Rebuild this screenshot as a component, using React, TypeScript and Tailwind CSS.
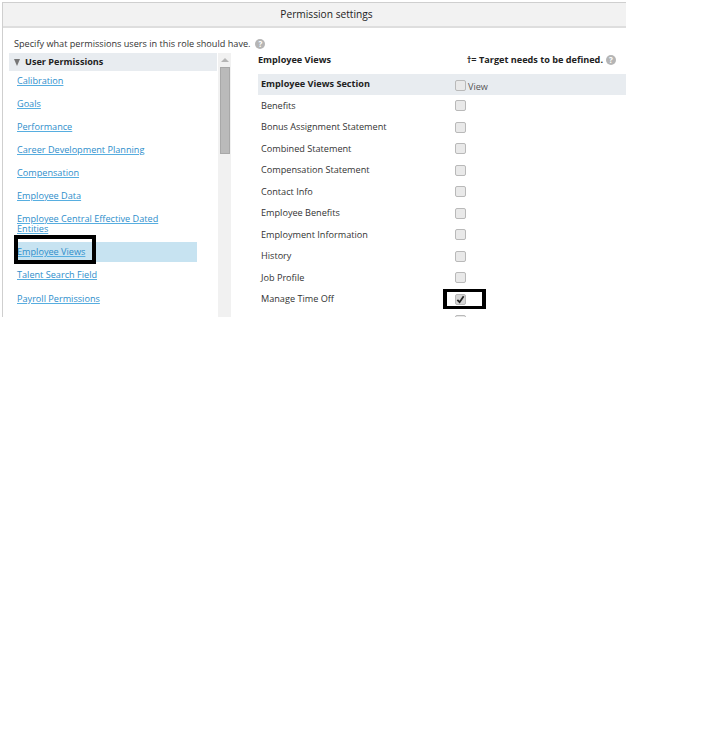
import { Fragment } from "react"

const links = [
  "Calibration",
  "Goals",
  "Performance",
  "Career Development Planning",
  "Compensation",
]

const views = [
  "Benefits",
  "Bonus Assignment Statement",
  "Combined Statement",
  "Compensation Statement",
  "Contact Info",
  "Employee Benefits",
  "Employment Information",
  "History",
  "Job Profile",
]

function Help() {
  return (
    <span className="inline-flex h-[10px] w-[10px] items-center justify-center rounded-full bg-[#b5b5b5] text-[8px] font-bold leading-none text-white">
      ?
    </span>
  )
}

function Box({ checked = false }: { checked?: boolean }) {
  return (
    <span
      className={`flex h-[11px] w-[11px] shrink-0 items-center justify-center rounded-[2px] border border-[#b9b9b9] ${
        checked ? "bg-[#d4d4d4]" : "bg-[#e9e9e9]"
      }`}
    >
      {checked && (
        <svg viewBox="0 0 10 10" className="h-[9px] w-[9px]">
          <path d="M1.5 5.5 L4 8 L8.5 1.5" fill="none" stroke="#222" strokeWidth="2" />
        </svg>
      )}
    </span>
  )
}

function PermLink({ children }: { children: string }) {
  return <a className="text-[#2e8ecb] underline decoration-[#57aee0]">{children}</a>
}

export default function App() {
  return (
    <div className="min-h-[729px] w-[724px] bg-white pt-[2px] pl-[2px] font-['Open_Sans',sans-serif] text-[9.15px] text-[#333]">
      <div className="relative h-[315px] w-[624px] overflow-hidden border-t border-l border-[#cfcfcf]">
        <div className="flex h-[25px] items-center justify-center border-b-2 border-[#dedede] bg-[#f2f2f2] text-[10.2px] text-[#222]">
          <span className="pl-[24px]">Permission settings</span>
        </div>

        <div className="flex h-[25px] items-center gap-[5px] pt-[6px] pl-[11px]">
          <span>Specify what permissions users in this role should have.</span>
          <Help />
        </div>

        <div className="flex">
          {/* left list */}
          <div className="ml-[6px] flex h-[264px] w-[222px] shrink-0">
            <div className="w-[208px]">
              <div className="flex h-[18px] items-center gap-[5px] bg-[#e8ecf0] pl-[5px] font-bold text-[#222]">
                <span className="h-0 w-0 border-x-[3.5px] border-t-[7px] border-x-transparent border-t-[#777]" />
                User Permissions
              </div>
              <ul className="-mt-[2px] w-[188px]">
                {links.map((link) => (
                  <li key={link} className="flex h-[23px] items-center pl-[8px]">
                    <PermLink>{link}</PermLink>
                  </li>
                ))}
                <li className="flex h-[23.5px] items-center pl-[8px]">
                  <PermLink>Employee Data</PermLink>
                </li>
                <li className="flex h-[32px] items-center pr-[20px] pl-[8px] leading-[9.5px]">
                  <PermLink>Employee Central Effective Dated Entities</PermLink>
                </li>
                <li className="mt-[2.5px] ml-[8px] flex h-[20px] items-center bg-[#c7e3f1]">
                  <PermLink>Employee Views</PermLink>
                </li>
                <li className="flex h-[25px] items-center pl-[8px]">
                  <PermLink>Talent Search Field</PermLink>
                </li>
                <li className="flex h-[24px] items-center pl-[8px]">
                  <PermLink>Payroll Permissions</PermLink>
                </li>
              </ul>
            </div>
            <div className="ml-[1px] w-[13px] bg-[#f1f1f1] pt-[5px]">
              <div className="mx-auto h-0 w-0 border-x-[4px] border-b-[4px] border-x-transparent border-b-[#b5b5b5]" />
              <div className="mx-auto mt-[5px] h-[87px] w-[10px] border border-[#a8a8a8] bg-[#bababa]" />
            </div>
          </div>

          {/* right table */}
          <div className="ml-[27px] flex-1">
            <div className="flex h-[21px] items-center justify-between pr-[10px] pb-[8px] font-bold text-[#222]">
              <span>Employee Views</span>
              <span className="flex items-center gap-[3px]">
                †= Target needs to be defined.
                <Help />
              </span>
            </div>
            <div className="grid grid-cols-[197px_1fr]">
              <div className="flex h-[21px] items-center bg-[#e8ecf0] pb-[1px] pl-[3px] font-bold text-[#222]">
                Employee Views Section
              </div>
              <div className="flex h-[21px] items-center gap-[2px] bg-[#e8ecf0] pt-[1px] text-[#555]">
                <Box />
                <span className="pt-[3px]">View</span>
              </div>
              {views.map((view) => (
                <Fragment key={view}>
                  <div className="flex h-[21.5px] items-center pl-[3px]">{view}</div>
                  <div className="flex h-[21.5px] items-center">
                    <Box />
                  </div>
                </Fragment>
              ))}
              <div className="flex h-[21.5px] items-center pl-[3px]">Manage Time Off</div>
              <div className="flex h-[21.5px] items-center">
                <Box checked />
              </div>
              <div className="h-[21.5px]" />
              <div className="flex h-[21.5px] items-center">
                <Box />
              </div>
            </div>
          </div>
        </div>

        {/* callouts drawn over the page */}
        <div className="absolute top-[232px] left-[11px] h-[29px] w-[82px] border-[4px] border-black" />
        <div className="absolute top-[286px] left-[440px] h-[20px] w-[43px] border-x-[4px] border-y-[3px] border-black" />
      </div>
    </div>
  )
}
